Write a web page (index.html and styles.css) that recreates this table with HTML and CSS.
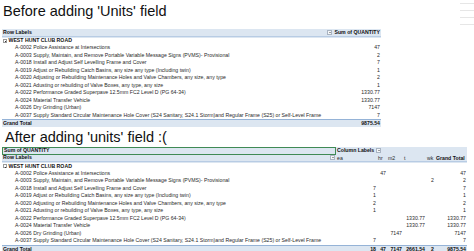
FILE: index.html
```html
<!DOCTYPE html>
<html>
<head>
<meta charset="utf-8">
<link rel="stylesheet" href="styles.css">
</head>
<body>
<div class="page">
  <div class="title-row">
    <h1 class="title">Before adding 'Units' field</h1>
    <div class="ghost"><i></i><i></i><i></i><i></i></div>
  </div>

  <div class="pivot p1">
    <div class="c hdr b">Row Labels</div>
    <div class="c hdr b val"><span class="dd"></span>Sum of QUANTITY</div>

    <div class="c grp b"><span class="box"></span>WEST HUNT CLUB ROAD</div>
    <div class="c grp"></div>

    <div class="c item">A-0002 Police Assistance at Intersections</div><div class="c num">47</div>
    <div class="c item">A-0003 Supply, Maintain, and Remove Portable Variable Message Signs (PVMS)- Provisional</div><div class="c num">2</div>
    <div class="c item">A-0018 Install and Adjust Self Levelling Frame and Cover</div><div class="c num">7</div>
    <div class="c item">A-0019 Adjust or Rebuilding Catch Basins, any size any type (Including twin)</div><div class="c num">1</div>
    <div class="c item">A-0020 Adjusting or Rebuilding Maintenance Holes and Valve Chambers, any size, any type</div><div class="c num">2</div>
    <div class="c item">A-0021 Adusting or rebuilding of Valve Boxes, any type, any size</div><div class="c num">1</div>
    <div class="c item">A-0022 Performance Graded Superpave 12.5mm FC2 Level D (PG 64-34)</div><div class="c num">1330.77</div>
    <div class="c item">A-0024 Material Transfer Vehicle</div><div class="c num">1330.77</div>
    <div class="c item">A-0026 Dry Grinding (Urban)</div><div class="c num">7147</div>
    <div class="c item">A-0037 Supply Standard Circular Maintenance Hole Cover (S24 Sanitary, S24.1 Storm)and Regular Frame (S25) or Self-Level Frame</div><div class="c num">7</div>

    <div class="c tot b">Grand Total</div><div class="c tot b num">9875.54</div>
  </div>

  <h1 class="title t2">After adding 'units' field :(</h1>

  <div class="pivot p2">
    <div class="c hdr b sel">Sum of QUANTITY</div>
    <div class="c hdr b span6">Column Labels <span class="dd after"></span></div>

    <div class="c hdr b lbl">Row Labels<span class="dd"></span></div>
    <div class="c hdr">ea</div>
    <div class="c hdr">hr</div>
    <div class="c hdr">m2</div>
    <div class="c hdr">t</div>
    <div class="c hdr">wk</div>
    <div class="c hdr b">Grand Total</div>

    <div class="c grp b"><span class="box"></span>WEST HUNT CLUB ROAD</div>
    <div class="c grp"></div><div class="c grp"></div><div class="c grp"></div><div class="c grp"></div><div class="c grp"></div><div class="c grp"></div>

    <div class="c item">A-0002 Police Assistance at Intersections</div>
    <div class="c num"></div><div class="c num">47</div><div class="c num"></div><div class="c num"></div><div class="c num"></div><div class="c num">47</div>

    <div class="c item">A-0003 Supply, Maintain, and Remove Portable Variable Message Signs (PVMS)- Provisional</div>
    <div class="c num"></div><div class="c num"></div><div class="c num"></div><div class="c num"></div><div class="c num">2</div><div class="c num">2</div>

    <div class="c item">A-0018 Install and Adjust Self Levelling Frame and Cover</div>
    <div class="c num">7</div><div class="c num"></div><div class="c num"></div><div class="c num"></div><div class="c num"></div><div class="c num">7</div>

    <div class="c item">A-0019 Adjust or Rebuilding Catch Basins, any size any type (Including twin)</div>
    <div class="c num">1</div><div class="c num"></div><div class="c num"></div><div class="c num"></div><div class="c num"></div><div class="c num">1</div>

    <div class="c item">A-0020 Adjusting or Rebuilding Maintenance Holes and Valve Chambers, any size, any type</div>
    <div class="c num">2</div><div class="c num"></div><div class="c num"></div><div class="c num"></div><div class="c num"></div><div class="c num">2</div>

    <div class="c item">A-0021 Adusting or rebuilding of Valve Boxes, any type, any size</div>
    <div class="c num">1</div><div class="c num"></div><div class="c num"></div><div class="c num"></div><div class="c num"></div><div class="c num">1</div>

    <div class="c item">A-0022 Performance Graded Superpave 12.5mm FC2 Level D (PG 64-34)</div>
    <div class="c num"></div><div class="c num"></div><div class="c num"></div><div class="c num">1330.77</div><div class="c num"></div><div class="c num">1330.77</div>

    <div class="c item">A-0024 Material Transfer Vehicle</div>
    <div class="c num"></div><div class="c num"></div><div class="c num"></div><div class="c num">1330.77</div><div class="c num"></div><div class="c num">1330.77</div>

    <div class="c item">A-0026 Dry Grinding (Urban)</div>
    <div class="c num"></div><div class="c num"></div><div class="c num">7147</div><div class="c num"></div><div class="c num"></div><div class="c num">7147</div>

    <div class="c item">A-0037 Supply Standard Circular Maintenance Hole Cover (S24 Sanitary, S24.1 Storm)and Regular Frame (S25) or Self-Level Frame</div>
    <div class="c num">7</div><div class="c num"></div><div class="c num"></div><div class="c num"></div><div class="c num"></div><div class="c num">7</div>

    <div class="c tot b">Grand Total</div>
    <div class="c tot b num">18</div><div class="c tot b num">47</div><div class="c tot b num">7147</div><div class="c tot b num">2661.54</div><div class="c tot b num">2</div><div class="c tot b num">9875.54</div>
  </div>
</div>
</body>
</html>
```

FILE: styles.css
```css
html, body {
  margin: 0;
  padding: 0;
  background: #ffffff;
}

.page {
  width: 474px;
  height: 251px;
  overflow: hidden;
  font-family: "Liberation Sans", Arial, sans-serif;
  color: #1a1a1a;
}

.title-row {
  display: flex;
  justify-content: space-between;
  align-items: flex-start;
}

.title {
  margin: 0;
  height: 29px;
  padding-left: 3px;
  font-family: "Liberation Sans", Arial, sans-serif;
  font-weight: normal;
  font-size: 14.5px;
  line-height: 23px;
  color: #111;
}

.t2 {
  height: 20.5px;
  line-height: 20.5px;
  padding-left: 5px;
}

.ghost {
  display: flex;
  flex-direction: column;
  gap: 6px;
  padding-top: 3px;
}

.ghost i {
  display: block;
  width: 14px;
  height: 1px;
  background: #e6e6e6;
}

.pivot {
  display: grid;
  margin-left: 2px;
  font-size: 5.2px;
  grid-auto-rows: 7.5px;
  line-height: 7.5px;
}

.p1 {
  grid-template-columns: 326px 53px;
}

.p2 {
  grid-template-columns: 334px 41px 10px 16px 23px 9px 32px;
}

.c {
  white-space: nowrap;
  position: relative;
  padding: 0 1px;
  color: #2a2a2a;
}

.b {
  font-weight: bold;
  color: #111;
}

.hdr {
  background: #dce6f1;
}

.p1 .hdr {
  border-bottom: 1px solid #b8cce4;
  box-sizing: border-box;
}

.p2 .hdr:not(.sel):not(.span6) {
  border-bottom: 1px solid #b8cce4;
  box-sizing: border-box;
}

.val {
  display: flex;
  justify-content: flex-end;
  align-items: center;
  gap: 2px;
}

.span6 {
  grid-column: span 6;
  display: flex;
  align-items: center;
  gap: 2px;
}

.lbl {
  display: flex;
  justify-content: space-between;
  align-items: center;
}

.sel {
  box-shadow: inset 0 0 0 1px #3f8a55;
  padding-left: 2px;
}

.dd {
  display: inline-block;
  width: 5px;
  height: 5px;
  box-sizing: border-box;
  border: 1px solid #a9b4c2;
  background: #f4f6f8;
  position: relative;
  flex: none;
}

.dd::after {
  content: "";
  position: absolute;
  left: 0.5px;
  top: 1px;
  border-left: 1.5px solid transparent;
  border-right: 1.5px solid transparent;
  border-top: 1.5px solid #444;
}

.grp {
  display: flex;
  align-items: center;
  border-top: 1px solid #dce6f1;
  box-sizing: border-box;
}

.box {
  display: inline-block;
  width: 4px;
  height: 4px;
  box-sizing: border-box;
  border: 0.5px solid #999;
  margin-right: 1.5px;
  position: relative;
  flex: none;
}

.box::after {
  content: "";
  position: absolute;
  left: 0.5px;
  right: 0.5px;
  top: 1.25px;
  height: 0.5px;
  background: #333;
}

.item {
  padding-left: 13px;
}

.num {
  text-align: right;
}

.tot {
  background: #dce6f1;
  border-top: 1px solid #95b3d7;
  box-sizing: border-box;
  line-height: 6.5px;
}
```
